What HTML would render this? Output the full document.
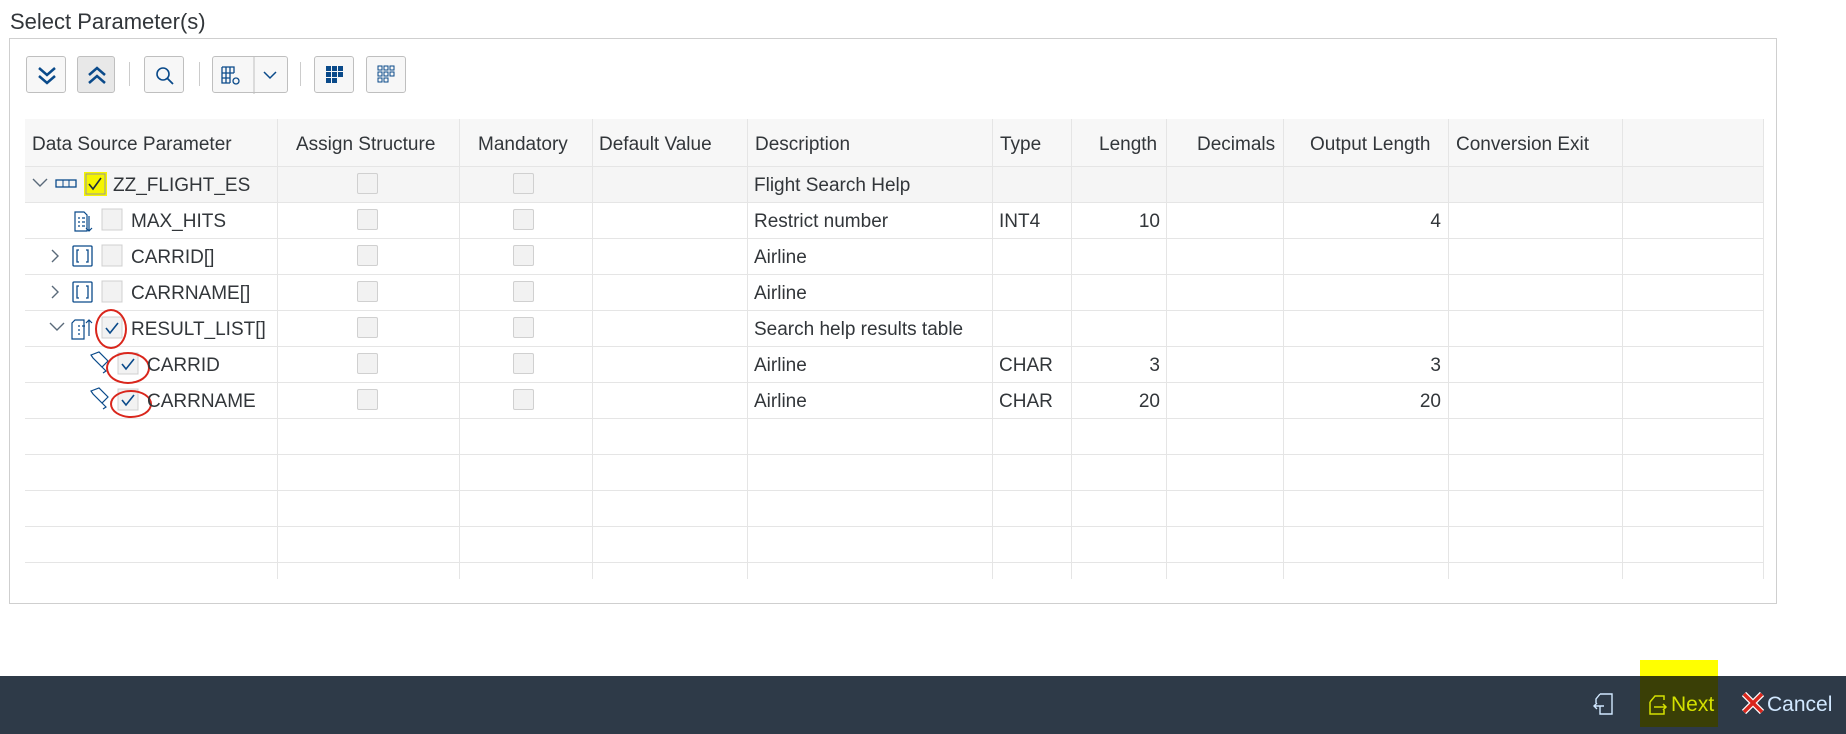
<!DOCTYPE html>
<html><head><meta charset="utf-8"><style>
*{margin:0;padding:0;box-sizing:border-box}
body{width:1846px;height:734px;position:relative;background:#fff;font-family:"Liberation Sans",sans-serif;color:#32363a;overflow:hidden}
.a{position:absolute}
.t{position:absolute;font-size:19px;white-space:nowrap;line-height:36px;margin-top:2px}
.btn{position:absolute;top:56px;height:37px;border:1px solid #bfbfbf;border-radius:3px;background:#f7f7f7}
.cb{position:absolute;width:21px;height:21px;border:1px solid #d0d0d0;background:#f2f2f2;border-radius:2px}
.vl{position:absolute;top:119px;height:460px;width:1px;background:#e5e5e5}
.hl{position:absolute;left:25px;width:1738px;height:1px;background:#e5e5e5}
.ell{position:absolute;border:2px solid #d9261c;border-radius:50%}
</style></head><body>
<div class="a" style="left:10px;top:9px;font-size:22px;color:#32363a">Select Parameter(s)</div>
<div class="a" style="left:9px;top:38px;width:1768px;height:566px;border:1px solid #cfcfcf"></div>

<div class="btn" style="left:26px;width:40px"><svg width="40" height="37"><path d="M12 11l8 7 8-7M12 19l8 7 8-7" fill="none" stroke="#0a4a8a" stroke-width="2.5"/></svg></div>
<div class="btn" style="left:77px;width:38px;background:#e8e8e8"><svg width="38" height="37"><path d="M11 18l8-7 8 7M11 26l8-7 8 7" fill="none" stroke="#0a4a8a" stroke-width="2.5"/></svg></div>
<div class="a" style="left:129px;top:62px;width:1px;height:24px;background:#ccc"></div>
<div class="btn" style="left:144px;width:40px"><svg width="40" height="37"><circle cx="18" cy="17" r="6" fill="none" stroke="#0a4a8a" stroke-width="1.6"/><path d="M22 21l6 6" stroke="#0a4a8a" stroke-width="1.8"/></svg></div>
<div class="a" style="left:199px;top:62px;width:1px;height:24px;background:#ccc"></div>
<div class="btn" style="left:212px;width:76px"><svg width="76" height="37"><path d="M9 10h12v6M9 10v16h8M9 16h12M9 21h8M13 10v16M17 10v16" fill="none" stroke="#0a4a8a" stroke-width="1.3"/><circle cx="23" cy="24" r="3" fill="none" stroke="#0a4a8a" stroke-width="1.3"/><path d="M41 0v37" stroke="#bfbfbf"/><path d="M51 15l6 6 6-6" fill="none" stroke="#0a4a8a" stroke-width="1.5"/></svg></div>
<div class="a" style="left:300px;top:62px;width:1px;height:24px;background:#ccc"></div>
<div class="btn" style="left:314px;width:40px"><svg width="40" height="37"><g fill="#0a4a8a"><rect x="11" y="9" width="5" height="5"/><rect x="17" y="9" width="5" height="5"/><rect x="23" y="9" width="5" height="5"/><rect x="11" y="15" width="5" height="5"/><rect x="17" y="15" width="5" height="5"/><rect x="23" y="15" width="5" height="5"/><rect x="11" y="21" width="5" height="5"/><rect x="17" y="21" width="5" height="5"/></g></svg></div>
<div class="btn" style="left:366px;width:40px"><svg width="40" height="37"><g fill="none" stroke="#0a4a8a" stroke-width="1"><rect x="11" y="9" width="4" height="4"/><rect x="17" y="9" width="4" height="4"/><rect x="23" y="9" width="4" height="4"/><rect x="11" y="15" width="4" height="4"/><rect x="17" y="15" width="4" height="4"/><rect x="23" y="15" width="4" height="4"/><rect x="11" y="21" width="4" height="4"/><rect x="17" y="21" width="4" height="4"/></g></svg></div>

<div class="a" style="left:25px;top:119px;width:1738px;height:47px;background:#f7f7f7"></div>
<div class="a" style="left:25px;top:166px;width:1738px;height:36px;background:#f5f5f5"></div>
<div class="hl" style="top:166px"></div><div class="hl" style="top:202px"></div><div class="hl" style="top:238px"></div><div class="hl" style="top:274px"></div><div class="hl" style="top:310px"></div><div class="hl" style="top:346px"></div><div class="hl" style="top:382px"></div><div class="hl" style="top:418px"></div><div class="hl" style="top:454px"></div><div class="hl" style="top:490px"></div><div class="hl" style="top:526px"></div><div class="hl" style="top:562px"></div>
<div class="vl" style="left:277px"></div><div class="vl" style="left:459px"></div><div class="vl" style="left:592px"></div><div class="vl" style="left:747px"></div><div class="vl" style="left:992px"></div><div class="vl" style="left:1071px"></div><div class="vl" style="left:1166px"></div><div class="vl" style="left:1283px"></div><div class="vl" style="left:1448px"></div><div class="vl" style="left:1622px"></div><div class="vl" style="left:1763px"></div>

<div class="t" style="left:32px;top:125px">Data Source Parameter</div>
<div class="t" style="left:296px;top:125px">Assign Structure</div>
<div class="t" style="left:478px;top:125px">Mandatory</div>
<div class="t" style="left:599px;top:125px">Default Value</div>
<div class="t" style="left:755px;top:125px">Description</div>
<div class="t" style="left:1000px;top:125px">Type</div>
<div class="t" style="left:1099px;top:125px">Length</div>
<div class="t" style="left:1197px;top:125px">Decimals</div>
<div class="t" style="left:1310px;top:125px">Output Length</div>
<div class="t" style="left:1456px;top:125px">Conversion Exit</div>

<div class="cb" style="left:357px;top:173px"></div><div class="cb" style="left:513px;top:173px"></div>
<div class="cb" style="left:357px;top:209px"></div><div class="cb" style="left:513px;top:209px"></div>
<div class="cb" style="left:357px;top:245px"></div><div class="cb" style="left:513px;top:245px"></div>
<div class="cb" style="left:357px;top:281px"></div><div class="cb" style="left:513px;top:281px"></div>
<div class="cb" style="left:357px;top:317px"></div><div class="cb" style="left:513px;top:317px"></div>
<div class="cb" style="left:357px;top:353px"></div><div class="cb" style="left:513px;top:353px"></div>
<div class="cb" style="left:357px;top:389px"></div><div class="cb" style="left:513px;top:389px"></div>

<svg class="a" style="left:25px;top:166px" width="250" height="252">
<path d="M8 13l7 7 7-7" fill="none" stroke="#5a6a7a" stroke-width="1.4"/>
<rect x="31" y="14" width="20" height="7" fill="none" stroke="#0a4a8a" stroke-width="1.3"/><path d="M38 14v7M44 14v7" stroke="#0a4a8a"/>
<rect x="59" y="6" width="23" height="24" fill="#f5f500"/><rect x="61" y="8" width="19" height="20" fill="#f5f500" stroke="#999"/>
<path d="M64 18l4 5 8-11" fill="none" stroke="#1d2d3e" stroke-width="1.6"/>
<g fill="none" stroke="#0a4a8a" stroke-width="1.2"><path d="M50 46h9l3 3v16h-12zM53 52h2M53 56h2M53 60h2M57 52h3M57 56h3M57 60h3M64 50v15M61 62l3 3 3-3"/></g>
<rect x="77" y="43" width="20" height="21" fill="#f2f2f2" stroke="#d0d0d0"/>
<path d="M27 84l6 6-6 6M27 120l6 6-6 6" fill="none" stroke="#5a6a7a" stroke-width="1.4"/>
<g fill="none" stroke="#0a4a8a" stroke-width="1.3"><rect x="48" y="80" width="19" height="20" rx="1"/><path d="M54 84h-2v12h2M61 84h2v12h-2"/><rect x="48" y="116" width="19" height="20" rx="1"/><path d="M54 120h-2v12h2M61 120h2v12h-2"/></g>
<rect x="77" y="79" width="20" height="21" fill="#f2f2f2" stroke="#d0d0d0"/><rect x="77" y="115" width="20" height="21" fill="#f2f2f2" stroke="#d0d0d0"/>
<path d="M25 157l7 7 7-7" fill="none" stroke="#5a6a7a" stroke-width="1.4"/>
<g fill="none" stroke="#0a4a8a" stroke-width="1.2"><path d="M50 154h9v19h-12v-16zM53 160h2M53 164h2M53 168h2M57 160h3M64 170v-16M61 157l3-3 3 3"/></g>
<rect x="77" y="151" width="20" height="21" fill="#f2f2f2" stroke="#d0d0d0"/><path d="M81 162l4 5 8-10" fill="none" stroke="#0a4a8a" stroke-width="1.6"/>
<g fill="none" stroke="#0a4a8a" stroke-width="1.2"><path d="M66 189l8-3 9 9-6 6-9-9zM72 196l9 9-3 2"/><path d="M66 225l8-3 9 9-6 6-9-9zM72 232l9 9-3 2"/></g>
<rect x="93" y="187" width="20" height="21" fill="#f2f2f2" stroke="#d0d0d0"/><path d="M97 198l4 5 8-10" fill="none" stroke="#0a4a8a" stroke-width="1.6"/>
<rect x="93" y="223" width="20" height="21" fill="#f2f2f2" stroke="#d0d0d0"/><path d="M97 234l4 5 8-10" fill="none" stroke="#0a4a8a" stroke-width="1.6"/>
</svg>
<div class="ell" style="left:95px;top:309px;width:32px;height:40px"></div>
<div class="ell" style="left:106px;top:352px;width:44px;height:32px"></div>
<div class="ell" style="left:110px;top:390px;width:42px;height:28px"></div>

<div class="t" style="left:113px;top:166px">ZZ_FLIGHT_ES</div>
<div class="t" style="left:131px;top:202px">MAX_HITS</div>
<div class="t" style="left:131px;top:238px">CARRID[]</div>
<div class="t" style="left:131px;top:274px">CARRNAME[]</div>
<div class="t" style="left:131px;top:310px">RESULT_LIST[]</div>
<div class="t" style="left:147px;top:346px">CARRID</div>
<div class="t" style="left:147px;top:382px">CARRNAME</div>

<div class="t" style="left:754px;top:166px">Flight Search Help</div>
<div class="t" style="left:754px;top:202px">Restrict number</div>
<div class="t" style="left:754px;top:238px">Airline</div>
<div class="t" style="left:754px;top:274px">Airline</div>
<div class="t" style="left:754px;top:310px">Search help results table</div>
<div class="t" style="left:754px;top:346px">Airline</div>
<div class="t" style="left:754px;top:382px">Airline</div>
<div class="t" style="left:999px;top:202px">INT4</div>
<div class="t" style="left:999px;top:346px">CHAR</div>
<div class="t" style="left:999px;top:382px">CHAR</div>
<div class="t" style="right:686px;top:202px">10</div>
<div class="t" style="right:686px;top:346px">3</div>
<div class="t" style="right:686px;top:382px">20</div>
<div class="t" style="right:405px;top:202px">4</div>
<div class="t" style="right:405px;top:346px">3</div>
<div class="t" style="right:405px;top:382px">20</div>

<div class="a" style="left:0;top:676px;width:1846px;height:58px;background:#2e3a48"></div>
<div class="a" style="left:1640px;top:660px;width:78px;height:16px;background:#ffff00"></div>
<div class="a" style="left:1640px;top:676px;width:78px;height:51px;background:#3a3f06"></div>
<svg class="a" style="left:1590px;top:690px" width="30" height="30"><path d="M10 4h12v20h-12v-8M10 4l-4 5v4M14 16h-10M7 13l-3 3 3 3" fill="none" stroke="#d1e8ff" stroke-width="1.4"/></svg>
<svg class="a" style="left:1644px;top:690px" width="30" height="30"><path d="M6 12l5-6h9v4M6 12v12h14v-4M10 17h12M19 14l3 3-3 3" fill="none" stroke="#d4e000" stroke-width="1.5"/></svg>
<div class="a" style="left:1671px;top:693px;font-size:21px;color:#d4e000">Next</div>
<svg class="a" style="left:1741px;top:691px" width="24" height="24"><path d="M3 3l18 18M21 3l-18 18" stroke="#fff" stroke-width="6"/><path d="M3 3l18 18M21 3l-18 18" stroke="#d9261c" stroke-width="3.5"/></svg>
<div class="a" style="left:1767px;top:693px;font-size:21px;color:#d1e8ff">Cancel</div>
</body></html>
